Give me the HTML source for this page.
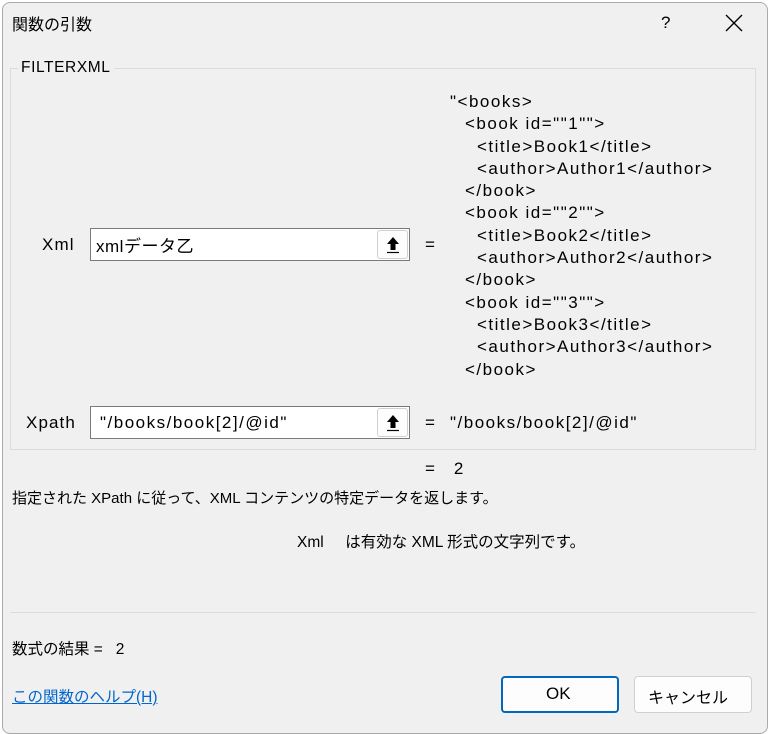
<!DOCTYPE html><html><head><meta charset="utf-8"><style>
body{margin:0;width:768px;height:728px;background:#fff;font-family:"Liberation Sans","Noto Sans CJK JP",sans-serif;color:#000;position:relative;overflow:hidden}
.dlg{position:absolute;left:2px;top:2px;width:764px;height:730px;background:#f0f0f0;border:1px solid #aaa;border-radius:8px}
.a{position:absolute;white-space:pre;font-size:17px}
.w{letter-spacing:1.5px}
.grp{position:absolute;left:10px;top:68px;width:744px;height:380px;border:1px solid #dcdcdc}
.in{position:absolute;background:#fff;border:1px solid #7a7a7a;box-sizing:border-box}
.btn{position:absolute;border:1px solid #d0d0d0;background:#fdfdfd;box-sizing:border-box;border-radius:3px}
.x div{height:22.3px}
</style></head><body>
<div class="dlg">
<div class="a" style="left:9px;top:8px;font-size:16px">関数の引数</div>
<div class="a" style="left:658px;top:10px">?</div>
<svg style="position:absolute;left:722px;top:11px" width="18" height="18"><path d="M1 1L17 17M17 1L1 17" stroke="#000" stroke-width="1.4"/></svg>
</div>
<div class="grp"></div>
<div class="a" style="left:18px;top:59px;background:#f0f0f0;padding:0 3px;font-size:15.5px;letter-spacing:0.6px">FILTERXML</div>
<div class="a" style="left:42px;top:235px;letter-spacing:1.1px">Xml</div>
<div class="in" style="left:90px;top:228px;width:320px;height:33px"></div>
<div class="a" style="left:96px;top:232px;letter-spacing:0.5px">xmlデータ乙</div>
<div class="btn" style="left:377px;top:230px;width:31px;height:29px"></div>
<svg style="position:absolute;left:385px;top:236px" width="16" height="18"><path d="M8 1L2 8H5.5V14H10.5V8H14Z" fill="#000"/><path d="M2 16.5H14" stroke="#000" stroke-width="1.2"/></svg>
<div class="a" style="left:425px;top:235px">=</div>
<div class="a w x" style="left:450px;top:91px;line-height:22.3px"><div>"&lt;books&gt;</div><div style="padding-left:15px">&lt;book id=""1""&gt;</div><div style="padding-left:27px">&lt;title&gt;Book1&lt;/title&gt;</div><div style="padding-left:27px">&lt;author&gt;Author1&lt;/author&gt;</div><div style="padding-left:15px">&lt;/book&gt;</div><div style="padding-left:15px">&lt;book id=""2""&gt;</div><div style="padding-left:27px">&lt;title&gt;Book2&lt;/title&gt;</div><div style="padding-left:27px">&lt;author&gt;Author2&lt;/author&gt;</div><div style="padding-left:15px">&lt;/book&gt;</div><div style="padding-left:15px">&lt;book id=""3""&gt;</div><div style="padding-left:27px">&lt;title&gt;Book3&lt;/title&gt;</div><div style="padding-left:27px">&lt;author&gt;Author3&lt;/author&gt;</div><div style="padding-left:15px">&lt;/book&gt;</div></div>
<div class="a" style="left:26px;top:413px;letter-spacing:1.1px">Xpath</div>
<div class="in" style="left:90px;top:406px;width:320px;height:33px"></div>
<div class="a w" style="left:100px;top:413px">"/books/book[2]/@id"</div>
<div class="btn" style="left:377px;top:408px;width:31px;height:29px"></div>
<svg style="position:absolute;left:385px;top:414px" width="16" height="18"><path d="M8 1L2 8H5.5V14H10.5V8H14Z" fill="#000"/><path d="M2 16.5H14" stroke="#000" stroke-width="1.2"/></svg>
<div class="a" style="left:425px;top:413px">=</div>
<div class="a w" style="left:450px;top:413px">"/books/book[2]/@id"</div>
<div class="a" style="left:425px;top:459px">=    2</div>
<div class="a" style="left:12px;top:487px;font-size:15px">指定された XPath に従って、XML コンテンツの特定データを返します。</div>
<div class="a" style="left:297px;top:530px;font-size:15.5px">Xml     は有効な XML 形式の文字列です。</div>
<div style="position:absolute;left:10px;top:612px;width:746px;border-top:1px solid #dcdcdc"></div>
<div class="a" style="left:12px;top:637px;font-size:15.5px">数式の結果 =   2</div>
<div class="a" style="left:12px;top:685px;font-size:15.5px;color:#0066cc;text-decoration:underline">この関数のヘルプ(H)</div>
<div class="btn" style="left:501px;top:676px;width:118px;height:37px;border:2px solid #0067c0;border-radius:4px"></div>
<div class="a" style="left:546px;top:684px">OK</div>
<div class="btn" style="left:634px;top:676px;width:118px;height:37px;border-radius:4px"></div>
<div class="a" style="left:648px;top:684px;font-size:16px">キャンセル</div>
</body></html>
